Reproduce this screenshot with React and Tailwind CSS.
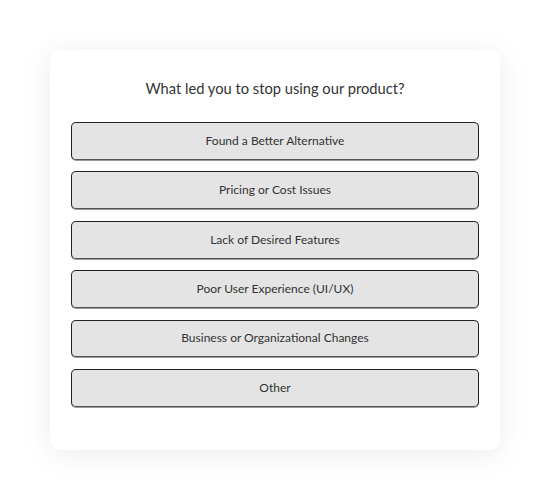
import React from 'react';

const reasons = [
  'Found a Better Alternative',
  'Pricing or Cost Issues',
  'Lack of Desired Features',
  'Poor User Experience (UI/UX)',
  'Business or Organizational Changes',
  'Other',
];

const App = () => {
  return (
    <div className="w-[550px] h-[500px] bg-white pt-[50px] pl-[50px]" style={{ fontFamily: 'Lato, sans-serif' }}>
      <div className="w-[450px] h-[400px] bg-white rounded-[10px] shadow-[0_4px_30px_rgba(0,0,0,0.08)] pt-[27px] px-[21px]">
        <h2 className="text-center text-[14.7px] text-[#333] leading-[22px] mb-[23px]">
          What led you to stop using our product?
        </h2>
        <div className="flex flex-col gap-[11.6px]">
          {reasons.map((reason) => (
            <button
              key={reason}
              className="h-[37.8px] w-full rounded-[5px] border border-[#222] border-b-[#555] bg-[#e4e4e4] shadow-[0_1px_0_#999] text-[12px] text-[#333]"
            >
              {reason}
            </button>
          ))}
        </div>
      </div>
    </div>
  );
};

export default App;
